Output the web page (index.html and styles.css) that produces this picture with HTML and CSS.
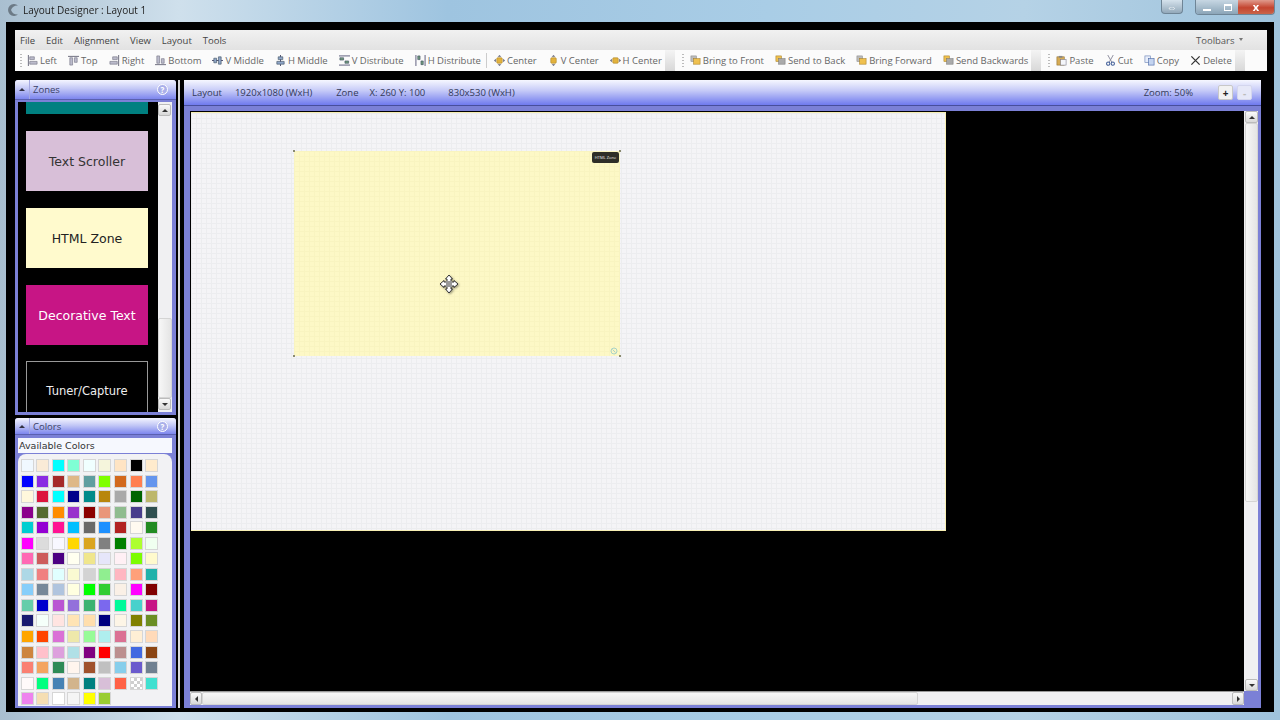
FILE: index.html
```html
<!DOCTYPE html>
<html lang="en">
<head>
<meta charset="utf-8">
<title>Layout Designer : Layout 1</title>
<link rel="stylesheet" href="styles.css">
</head>
<body>
<svg class="defs" width="0" height="0">
  <defs>
    <symbol id="i-left" viewBox="0 0 12 12"><path d="M1.5 0v12" stroke="#667" fill="none"/><path d="M3 2h5v3H3zM3 7h8v3H3z" fill="#bbc" stroke="#778" stroke-width=".7"/></symbol>
    <symbol id="i-top" viewBox="0 0 12 12"><path d="M0 1.5h12" stroke="#667" fill="none"/><path d="M2 3h3v8H2zM7 3h3v5H7z" fill="#bbc" stroke="#778" stroke-width=".7"/></symbol>
    <symbol id="i-right" viewBox="0 0 12 12"><path d="M10.5 0v12" stroke="#667" fill="none"/><path d="M4 2h5v3H4zM1 7h8v3H1z" fill="#bbc" stroke="#778" stroke-width=".7"/></symbol>
    <symbol id="i-bottom" viewBox="0 0 12 12"><path d="M0 10.5h12" stroke="#667" fill="none"/><path d="M2 1h3v8H2zM7 4h3v5H7z" fill="#bbc" stroke="#778" stroke-width=".7"/></symbol>
    <symbol id="i-vmid" viewBox="0 0 12 12"><path d="M0 6h12" stroke="#446" fill="none"/><path d="M2 3.500h3v5H2zM7 2h3v8H7z" fill="#8fa6c8" stroke="#456" stroke-width=".7"/></symbol>
    <symbol id="i-hmid" viewBox="0 0 12 12"><path d="M6 0v12" stroke="#446" fill="none"/><path d="M3.500 2h5v3h-5zM2 7h8v3H2z" fill="#8fa6c8" stroke="#456" stroke-width=".7"/></symbol>
    <symbol id="i-vdist" viewBox="0 0 12 12"><path d="M0 1h12M0 11h12" stroke="#557" fill="none"/><path d="M1 3h4v2.500H1zM6.500 6.500h4V9h-4z" fill="#6f9a7a" stroke="#456" stroke-width=".7"/></symbol>
    <symbol id="i-hdist" viewBox="0 0 12 12"><path d="M1 0v12M11 0v12" stroke="#557" fill="none"/><path d="M3 1h2.500v4H3zM6.500 6.500H9v4H6.500z" fill="#6f9a7a" stroke="#456" stroke-width=".7"/></symbol>
    <symbol id="i-center" viewBox="0 0 12 12"><path d="M6 0l2 2H4zM6 12l2-2H4zM0 6l2-2v4zM12 6l-2-2v4z" fill="#667"/><rect x="3" y="3" width="6" height="6" rx="1" fill="#e3b23c" stroke="#a57d1f" stroke-width=".6"/></symbol>
    <symbol id="i-vcenter" viewBox="0 0 12 12"><path d="M6 0l2 2H4zM6 12l2-2H4z" fill="#667"/><rect x="3" y="3" width="6" height="6" rx="1" fill="#e3b23c" stroke="#a57d1f" stroke-width=".6"/></symbol>
    <symbol id="i-hcenter" viewBox="0 0 12 12"><path d="M0 6l2-2v4zM12 6l-2-2v4z" fill="#667"/><rect x="3" y="3" width="6" height="6" rx="1" fill="#e3b23c" stroke="#a57d1f" stroke-width=".6"/></symbol>
    <symbol id="i-front" viewBox="0 0 12 12"><rect x="1" y="1" width="6" height="6" fill="#bbb" stroke="#888" stroke-width=".6"/><rect x="4" y="4" width="7" height="6" fill="#efc04e" stroke="#a57d1f" stroke-width=".6"/></symbol>
    <symbol id="i-back" viewBox="0 0 12 12"><rect x="1" y="1" width="6" height="6" fill="#efc04e" stroke="#a57d1f" stroke-width=".6"/><rect x="4" y="4" width="7" height="6" fill="#aaa" stroke="#777" stroke-width=".6"/></symbol>
    <symbol id="i-paste" viewBox="0 0 12 12"><rect x="1" y="2" width="8" height="9" fill="#d6ab54" stroke="#8a6a2a" stroke-width=".6"/><rect x="3" y="1" width="4" height="2" fill="#888"/><rect x="5" y="5" width="6" height="6" fill="#f4f6fa" stroke="#778" stroke-width=".6"/></symbol>
    <symbol id="i-cut" viewBox="0 0 12 12"><path d="M3 0l4.500 8M9 0L4.500 8" stroke="#889" fill="none"/><circle cx="3.500" cy="9.500" r="1.800" fill="none" stroke="#3c5a96" stroke-width="1.100"/><circle cx="8.500" cy="9.500" r="1.800" fill="none" stroke="#3c5a96" stroke-width="1.100"/></symbol>
    <symbol id="i-copy" viewBox="0 0 12 12"><rect x="1" y="1" width="6" height="7" fill="#e8eefa" stroke="#6f86b8" stroke-width=".7"/><rect x="5" y="4" width="6" height="7" fill="#c4d4f0" stroke="#4f6ca8" stroke-width=".7"/></symbol>
    <symbol id="i-del" viewBox="0 0 12 12"><path d="M1.500 1.500l9 9M10.500 1.500l-9 9" stroke="#333" stroke-width="1.400" fill="none"/></symbol>
  </defs>
</svg>

<div class="window">
  <header class="titlebar">
    <svg class="app-icon" width="12" height="12" viewBox="0 0 12 12"><path d="M11 1.500A6 6 0 1 0 11 10.500 7 7 0 0 1 4 6 7 7 0 0 1 11 1.500z" fill="#6c7a86"/></svg>
    <span class="title-text">Layout Designer : Layout 1</span>
    <div class="spacer"></div>
    <div class="cap-btn cap-extra">&#8660;</div>
    <div class="cap-group">
      <div class="cap-btn cap-min"><i></i></div>
      <div class="cap-btn cap-max"><i></i></div>
      <div class="cap-btn cap-close">x</div>
    </div>
  </header>

  <div class="client">
    <div class="bars">
      <nav class="menubar">
        <span>File</span><span>Edit</span><span>Alignment</span><span>View</span><span>Layout</span><span>Tools</span>
        <div class="spacer"></div>
        <span class="toolbars">Toolbars <b class="caret"></b></span>
      </nav>
      <div class="toolbar">
        <div class="grip"></div>
        <div class="tool t-first"><svg><use href="#i-left"/></svg>Left</div>
        <div class="tool"><svg><use href="#i-top"/></svg>Top</div>
        <div class="tool"><svg><use href="#i-right"/></svg>Right</div>
        <div class="tool"><svg><use href="#i-bottom"/></svg>Bottom</div>
        <div class="tool"><svg><use href="#i-vmid"/></svg>V Middle</div>
        <div class="tool"><svg><use href="#i-hmid"/></svg>H Middle</div>
        <div class="tool"><svg><use href="#i-vdist"/></svg>V Distribute</div>
        <div class="tool"><svg><use href="#i-hdist"/></svg>H Distribute</div>
        <div class="sep"></div>
        <div class="tool"><svg><use href="#i-center"/></svg>Center</div>
        <div class="tool"><svg><use href="#i-vcenter"/></svg>V Center</div>
        <div class="tool"><svg><use href="#i-hcenter"/></svg>H Center</div>
        <div class="end-cap"></div>
        <div class="grip"></div>
        <div class="tool"><svg><use href="#i-front"/></svg>Bring to Front</div>
        <div class="tool"><svg><use href="#i-back"/></svg>Send to Back</div>
        <div class="tool"><svg><use href="#i-front"/></svg>Bring Forward</div>
        <div class="tool"><svg><use href="#i-back"/></svg>Send Backwards</div>
        <div class="end-cap"></div>
        <div class="grip"></div>
        <div class="tool"><svg><use href="#i-paste"/></svg>Paste</div>
        <div class="tool"><svg><use href="#i-cut"/></svg>Cut</div>
        <div class="tool"><svg><use href="#i-copy"/></svg>Copy</div>
        <div class="tool"><svg><use href="#i-del"/></svg>Delete</div>
        <div class="end-cap"></div>
      </div>
    </div>

    <div class="workspace">
      <aside class="sidebar">
        <section class="panel zones">
          <div class="panel-head">
            <span class="collapse"></span>
            <span class="panel-title">Zones</span>
            <span class="help">?</span>
          </div>
          <div class="zones-body">
            <div class="zone-list">
              <div class="zone-card c-horizontal">Horizontal</div>
              <div class="zone-card c-scroller">Text Scroller</div>
              <div class="zone-card c-html">HTML Zone</div>
              <div class="zone-card c-deco">Decorative Text</div>
              <div class="zone-card c-tuner">Tuner/Capture</div>
            </div>
            <div class="vscroll zones-scroll">
              <div class="sb-btn sb-up"></div>
              <div class="sb-track zones-track"><div class="sb-thumb"></div></div>
              <div class="sb-btn sb-down"></div>
            </div>
          </div>
        </section>
        <section class="panel colors">
          <div class="panel-head">
            <span class="collapse"></span>
            <span class="panel-title">Colors</span>
            <span class="help">?</span>
          </div>
          <div class="avail">Available Colors</div>
          <div class="swatches">
            <i style="background:#f0f8ff"></i><i style="background:#faebd7"></i><i style="background:#00ffff"></i><i style="background:#7fffd4"></i><i style="background:#f0ffff"></i><i style="background:#f5f5dc"></i><i style="background:#ffe4c4"></i><i style="background:#000000"></i><i style="background:#ffebcd"></i>
            <i style="background:#0000ff"></i><i style="background:#8a2be2"></i><i style="background:#a52a2a"></i><i style="background:#deb887"></i><i style="background:#5f9ea0"></i><i style="background:#7fff00"></i><i style="background:#d2691e"></i><i style="background:#ff7f50"></i><i style="background:#6495ed"></i>
            <i style="background:#fff8dc"></i><i style="background:#dc143c"></i><i style="background:#00ffff"></i><i style="background:#00008b"></i><i style="background:#008b8b"></i><i style="background:#b8860b"></i><i style="background:#a9a9a9"></i><i style="background:#006400"></i><i style="background:#bdb76b"></i>
            <i style="background:#8b008b"></i><i style="background:#556b2f"></i><i style="background:#ff8c00"></i><i style="background:#9932cc"></i><i style="background:#8b0000"></i><i style="background:#e9967a"></i><i style="background:#8fbc8f"></i><i style="background:#483d8b"></i><i style="background:#2f4f4f"></i>
            <i style="background:#00ced1"></i><i style="background:#9400d3"></i><i style="background:#ff1493"></i><i style="background:#00bfff"></i><i style="background:#696969"></i><i style="background:#1e90ff"></i><i style="background:#b22222"></i><i style="background:#fffaf0"></i><i style="background:#228b22"></i>
            <i style="background:#ff00ff"></i><i style="background:#dcdcdc"></i><i style="background:#f8f8ff"></i><i style="background:#ffd700"></i><i style="background:#daa520"></i><i style="background:#808080"></i><i style="background:#008000"></i><i style="background:#adff2f"></i><i style="background:#f0fff0"></i>
            <i style="background:#ff69b4"></i><i style="background:#cd5c5c"></i><i style="background:#4b0082"></i><i style="background:#fffff0"></i><i style="background:#f0e68c"></i><i style="background:#e6e6fa"></i><i style="background:#fff0f5"></i><i style="background:#7cfc00"></i><i style="background:#fffacd"></i>
            <i style="background:#add8e6"></i><i style="background:#f08080"></i><i style="background:#e0ffff"></i><i style="background:#fafad2"></i><i style="background:#d3d3d3"></i><i style="background:#90ee90"></i><i style="background:#ffb6c1"></i><i style="background:#ffa07a"></i><i style="background:#20b2aa"></i>
            <i style="background:#87cefa"></i><i style="background:#778899"></i><i style="background:#b0c4de"></i><i style="background:#ffffe0"></i><i style="background:#00ff00"></i><i style="background:#32cd32"></i><i style="background:#faf0e6"></i><i style="background:#ff00ff"></i><i style="background:#800000"></i>
            <i style="background:#66cdaa"></i><i style="background:#0000cd"></i><i style="background:#ba55d3"></i><i style="background:#9370db"></i><i style="background:#3cb371"></i><i style="background:#7b68ee"></i><i style="background:#00fa9a"></i><i style="background:#48d1cc"></i><i style="background:#c71585"></i>
            <i style="background:#191970"></i><i style="background:#f5fffa"></i><i style="background:#ffe4e1"></i><i style="background:#ffe4b5"></i><i style="background:#ffdead"></i><i style="background:#000080"></i><i style="background:#fdf5e6"></i><i style="background:#808000"></i><i style="background:#6b8e23"></i>
            <i style="background:#ffa500"></i><i style="background:#ff4500"></i><i style="background:#da70d6"></i><i style="background:#eee8aa"></i><i style="background:#98fb98"></i><i style="background:#afeeee"></i><i style="background:#db7093"></i><i style="background:#ffefd5"></i><i style="background:#ffdab9"></i>
            <i style="background:#cd853f"></i><i style="background:#ffc0cb"></i><i style="background:#dda0dd"></i><i style="background:#b0e0e6"></i><i style="background:#800080"></i><i style="background:#ff0000"></i><i style="background:#bc8f8f"></i><i style="background:#4169e1"></i><i style="background:#8b4513"></i>
            <i style="background:#fa8072"></i><i style="background:#f4a460"></i><i style="background:#2e8b57"></i><i style="background:#fff5ee"></i><i style="background:#a0522d"></i><i style="background:#c0c0c0"></i><i style="background:#87ceeb"></i><i style="background:#6a5acd"></i><i style="background:#708090"></i>
            <i style="background:#fffafa"></i><i style="background:#00ff7f"></i><i style="background:#4682b4"></i><i style="background:#d2b48c"></i><i style="background:#008080"></i><i style="background:#d8bfd8"></i><i style="background:#ff6347"></i><i class="sw-transparent"></i><i style="background:#40e0d0"></i>
            <i style="background:#ee82ee"></i><i style="background:#f5deb3"></i><i style="background:#ffffff"></i><i style="background:#f5f5f5"></i><i style="background:#ffff00"></i><i style="background:#9acd32"></i>
          </div>
        </section>
      </aside>

      <div class="divider"></div>

      <main class="designer">
        <div class="designer-head">
          <span class="h-layout">Layout</span>
          <span class="h-res">1920x1080 (WxH)</span>
          <span class="h-zone">Zone</span>
          <span class="h-xy">X: 260 Y: 100</span>
          <span class="h-size">830x530 (WxH)</span>
          <div class="spacer"></div>
          <span class="h-zoom">Zoom: 50%</span>
          <span class="zoom-btn">+</span>
          <span class="zoom-btn zoom-off">-</span>
        </div>
        <div class="designer-body">
          <div class="viewport">
            <div class="stage">
              <div class="html-zone">
                <span class="badge">HTML Zone</span>
                <b class="handle h-tl"></b><b class="handle h-tr"></b><b class="handle h-bl"></b><b class="handle h-br"></b>
                <svg class="resize-ico" width="8" height="8" viewBox="0 0 8 8"><circle cx="4" cy="4" r="3" fill="none" stroke="#a9d3c6" stroke-width="1"/><path d="M2.500 2.500l3 3" stroke="#a9d3c6"/></svg>
                <svg class="move-cursor" width="22" height="22" viewBox="0 0 22 22"><path d="M11 2l3.500 4H13v3h3V7.500l4 3.500-4 3.500V13h-3v3h1.500L11 20l-3.500-4H9v-3H6v1.500L2 11l4-3.500V9h3V6H7.500z" fill="#fff" stroke="#333" stroke-width="1"/><rect x="8" y="8" width="6" height="6" fill="#999"/></svg>
              </div>
            </div>
          </div>
          <div class="vscroll main-v">
            <div class="sb-btn sb-up"></div>
            <div class="sb-track main-v-track"><div class="sb-thumb"></div></div>
            <div class="sb-btn sb-down"></div>
          </div>
          <div class="hscroll">
            <div class="sb-btn sb-left"></div>
            <div class="sb-track h-track"><div class="sb-thumb"></div></div>
            <div class="sb-btn sb-right"></div>
          </div>
        </div>
      </main>
    </div>
  </div>
</div>
</body>
</html>
```

FILE: styles.css
```css
* { box-sizing: border-box; }
html, body { margin: 0; height: 100%; overflow: hidden; }
body { font-family: "Open Sans", "Noto Sans", "Liberation Sans", sans-serif; }
.defs { position: absolute; }
.spacer { flex: 1; }

.window {
  width: 1280px; height: 720px;
  display: flex; flex-direction: column;
  padding: 0 6px 8px;
  background: linear-gradient(90deg, #a9bfd0 0, #cfe0ec 14%, #9ec4e0 35%, #a9cde6 60%, #b5d2e6 80%, #9fc3dc 100%);
  filter: blur(.35px);
}

/* title bar */
.titlebar { height: 22px; flex: none; display: flex; align-items: flex-start; position: relative; margin: 0 -6px; padding: 0 5px 0 7px; }
.app-icon { margin-top: 4px; }
.title-text { margin: 3px 0 0 4px; font-size: 10px; line-height: 14px; color: #222; }
.cap-btn { height: 14px; display: flex; align-items: center; justify-content: center; font-size: 10px; color: #fff; }
.cap-extra { width: 22px; margin-right: 12px; border: 1px solid #6f8596; border-top: 0; border-radius: 0 0 4px 4px; background: linear-gradient(#d5e2ec, #93a9ba); font-size: 11px; line-height: 10px; }
.cap-group { display: flex; border: 1px solid #6f8596; border-top: 0; border-radius: 0 0 4px 4px; overflow: hidden; }
.cap-min { width: 22px; background: linear-gradient(#c7d7e3, #8ba5b8); }
.cap-min i { width: 8px; height: 2px; margin-top: 5px; background: #fff; }
.cap-max { width: 20px; background: linear-gradient(#c7d7e3, #8ba5b8); }
.cap-max i { width: 8px; height: 7px; border: 1px solid #fff; border-top-width: 2px; }
.cap-close { width: 36px; background: linear-gradient(#e09a8c, #c4442f 55%, #c9654a); font-weight: 700; font-size: 11px; line-height: 12px; }

/* client */
.client { flex: 1; min-height: 0; background: #000; padding: 8px 7px 0 9px; display: flex; flex-direction: column; }
.bars { flex: none; height: 41px; background: #fbfbfb; display: flex; flex-direction: column; }
.menubar { height: 20px; flex: none; display: flex; align-items: center; padding: 0 24px 0 5px; gap: 11px; font-size: 9.500px; color: #444; background: linear-gradient(#f1f1f1, #e2e2e2); }
.toolbars { color: #555; font-size: 9.500px; }
.caret { display: inline-block; border: 2px solid transparent; border-top: 3px solid #777; border-bottom: 0; margin: 0 0 2px 2px; vertical-align: middle; }
.toolbar { flex: 1; display: flex; align-items: center; font-size: 9.500px; color: #666; padding-left: 5px; white-space: nowrap; }
.grip { width: 2px; height: 13px; margin-right: 6px; background: repeating-linear-gradient(#bbb 0 1px, transparent 1px 3px); }
.tool { display: flex; align-items: center; margin-right: 11px; }
.tool svg { width: 11px; height: 11px; margin-right: 2px; flex: none; }
.t-first { margin-left: -1px; }
.sep { width: 1px; height: 15px; background: #ccc; margin-right: 7px; margin-left: -6px; }
.end-cap { width: 10px; height: 21px; margin-left: -8px; margin-right: 7px; background: linear-gradient(#f4f4f4, #d8d8d8); position: relative; }

/* workspace */
.workspace { flex: 1; min-height: 0; display: flex; padding-top: 9px; padding-bottom: 4px; padding-right: 6px; }
.sidebar { width: 161px; flex: none; display: flex; flex-direction: column; gap: 3px; }
.divider { width: 2px; margin: 0 4px 0 2px; background: #d8d8d8; flex: none; }

.panel { background: #7b80d6; display: flex; flex-direction: column; border-radius: 3px 3px 0 0; }
.panel-head {
  height: 20px; flex: none; display: flex; align-items: center;
  background: linear-gradient(#f4f5ff 0, #c3c8f6 45%, #7d86ee 100%);
  border-bottom: 1px solid #5a60b0; font-size: 9.500px; color: #3a3f66;
  border-radius: 3px 3px 0 0;
}
.collapse { width: 15px; height: 100%; display: flex; align-items: center; justify-content: center; border-right: 1px solid #a5a9e0; flex: none; }
.collapse::before { content: ""; border: 3px solid transparent; border-top: 0; border-bottom: 3px solid #334; }
.panel-title { margin-left: 2px; flex: 1; padding-left: 1px; }
.help { width: 11px; height: 11px; margin-right: 8px; border: 1px solid #fff; border-radius: 50%; font-size: 8px; line-height: 9px; text-align: center; color: #fff; background: #aab0ea; font-weight: 700; }

.zones { height: 335px; flex: none; }
.zones-body { flex: 1; min-height: 0; margin: 2px 4px 3px 3px; background: #000; display: flex; }
.zone-list { flex: 1; min-width: 0; overflow: hidden; padding: 0 10px 0 8px; }
.zone-card {
  height: 60px; margin-bottom: 17px; display: flex; align-items: center; justify-content: center;
  font-family: "DejaVu Sans", sans-serif; font-size: 12.500px;
}
.c-horizontal { background: #008080; color: #fff; margin-top: -48px; }
.c-scroller { background: #d8bfd8; color: #333; }
.c-html { background: #fffacd; color: #222; }
.c-deco { background: #c71585; color: #fff; }
.c-tuner { background: #000; color: #eee; border: 1px solid #999; font-size: 11.500px; margin-top: -1px; }

.vscroll { width: 14px; flex: none; display: flex; flex-direction: column; background: #f0f0f2; }
.hscroll { display: flex; background: #f0f0f2; height: 14px; }
.sb-track { flex: 1; min-width: 0; min-height: 0; }
.sb-thumb { background: linear-gradient(90deg, #f7f7f7, #e4e4e4); border: 1px solid #d4d4d4; border-radius: 2px; }
.sb-btn { flex: none; width: 13px; height: 12px; border: 1px solid #bbb; border-radius: 2px; background: linear-gradient(#fafafa, #d8d8d8); display: flex; align-items: center; justify-content: center; }
.sb-up::before { content: ""; border: 3px solid transparent; border-top: 0; border-bottom: 3px solid #333; }
.sb-down::before { content: ""; border: 3px solid transparent; border-bottom: 0; border-top: 3px solid #333; }
.sb-left::before { content: ""; border: 3px solid transparent; border-left: 0; border-right: 3px solid #333; }
.sb-right::before { content: ""; border: 3px solid transparent; border-right: 0; border-left: 3px solid #333; }
.zones-scroll { padding-top: 2px; padding-bottom: 2px; }
.zones-track { display: flex; flex-direction: column; justify-content: flex-end; }
.zones-track .sb-thumb { height: 80px; }

.colors { flex: 1; min-height: 0; }
.colors .panel-head { height: 17px; }
.avail { height: 15px; margin: 3px 4px 1px 3px; flex: none; background: #f6f8fe; font-family: "DejaVu Sans", sans-serif; font-size: 9.500px; line-height: 15px; color: #333; padding-left: 1px; }
.swatches {
  flex: 1; min-height: 0; margin: 0 4px 2px 3px; padding: 5px 0 0 2.500px;
  background: #f2f2f4; border-radius: 8px 8px 0 0;
  display: grid; grid-template-columns: repeat(9, 13px); column-gap: 2.600px;
  grid-auto-rows: 13px; row-gap: 2.550px; align-content: start;
}
.swatches i { display: block; border: 1px solid #d6d6d6; }
.sw-transparent { background: repeating-conic-gradient(#cfcfcf 0 25%, #fff 0 50%) 0 0 / 6px 6px; }

/* designer */
.designer { flex: 1; min-width: 0; display: flex; flex-direction: column; background: #7b80d6; border-radius: 3px 3px 0 0; }
.designer-head {
  height: 26px; flex: none; display: flex; align-items: center; padding: 0 9px 0 8px;
  background: linear-gradient(#f6f7ff 0, #c9cdf8 40%, #6f7aee 100%);
  border-bottom: 1px solid #484e9c; font-size: 9.500px; color: #333a58;
}
.h-res { margin-left: 13px; }
.h-zone { margin-left: 24px; }
.h-xy { margin-left: 11px; }
.h-size { margin-left: 23px; }
.zoom-btn { width: 15px; height: 15px; margin-left: 5px; display: flex; align-items: center; justify-content: center; border: 1px solid #c8c8c8; background: #f2f2f2; border-radius: 2px; font-size: 10px; line-height: 10px; color: #222; font-weight: 700; }
.zoom-btn:first-of-type { margin-left: 0; }
.h-zoom { margin-right: 20px; }
.zoom-off { background: #e6e8f8; color: #bbb; border-color: #d4d6ee; margin-left: 4px; }
.designer-body {
  flex: 1; min-height: 0; margin: 5px 3px 3px 6px;
  display: grid; grid-template-columns: 1fr 14px; grid-template-rows: 1fr 14px;
}
.viewport { background: #000; padding: 1px 0 0 1px; overflow: hidden; min-width: 0; min-height: 0; }
.stage {
  width: 755px; height: 419px; padding: 38px 0 0 103px;
  background-color: #f4f4f6;
  background-image: linear-gradient(#ecedef 1px, transparent 1px), linear-gradient(90deg, #ecedef 1px, transparent 1px);
  background-size: 5px 5px;
  border-top: 1px solid #f7efb4; border-right: 1px solid #f7efb4; border-bottom: 1px solid #f7efb4;
}
.html-zone {
  width: 326px; height: 205px; position: relative;
  background-color: #fdf8c6;
  background-image: linear-gradient(#f9f4c0 1px, transparent 1px), linear-gradient(90deg, #f9f4c0 1px, transparent 1px);
  background-size: 5px 5px;
}
.badge { position: absolute; top: 1px; right: 1px; width: 27px; height: 11px; background: #2e2e28; border-radius: 2px; color: #eee; font-size: 4px; line-height: 11px; text-align: center; white-space: nowrap; }
.handle { position: absolute; width: 2px; height: 2px; background: #8a8a70; }
.h-tl { left: -1px; top: -1px; } .h-tr { right: -1px; top: -1px; }
.h-bl { left: -1px; bottom: -1px; } .h-br { right: -1px; bottom: -1px; }
.resize-ico { position: absolute; right: 2px; bottom: 1px; }
.move-cursor { position: absolute; left: 144px; top: 122px; filter: drop-shadow(1px 1px 1px rgba(0,0,0,.4)); }

.main-v { border-left: 1px solid #f0f0f2; }
.main-v-track { padding-top: 0; }
.main-v-track .sb-thumb { height: 379px; }
.main-v .sb-btn { margin-top: 0; height: 12px; }
.hscroll { border-top: 1px solid #999; }
.hscroll .sb-btn { width: 12px; height: 13px; }
.h-track { display: flex; }
.h-track .sb-thumb { width: 716px; background: linear-gradient(#f7f7f7, #e4e4e4); }
```
